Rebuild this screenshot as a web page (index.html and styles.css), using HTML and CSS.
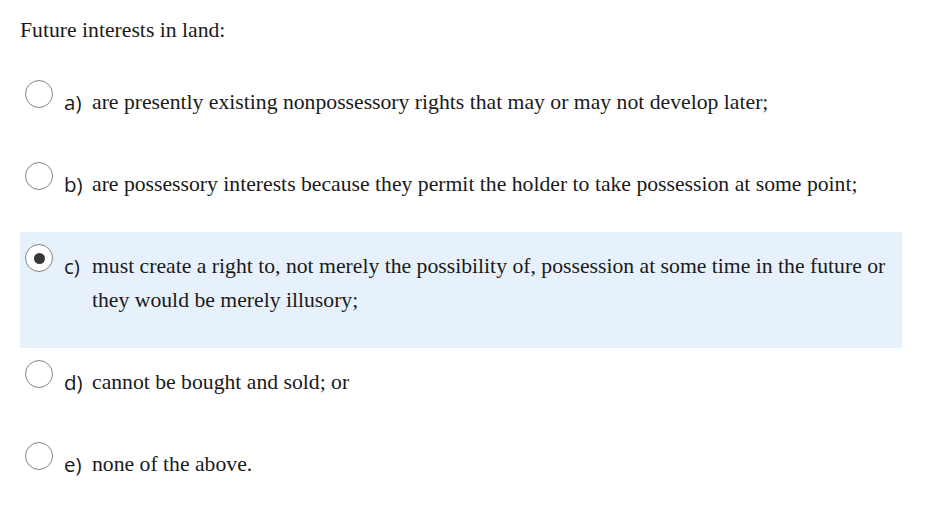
FILE: index.html
```html
<!DOCTYPE html>
<html>
<head>
<meta charset="utf-8">
<link rel="stylesheet" href="styles.css">
</head>
<body>
<div class="question">
  <div class="stem">Future interests in land:</div>
  <div class="options">
    <div class="option">
      <span class="radio"></span>
      <span class="letter">a)</span>
      <span class="text">are presently existing nonpossessory rights that may or may not develop later;</span>
    </div>
    <div class="option">
      <span class="radio"></span>
      <span class="letter">b)</span>
      <span class="text">are possessory interests because they permit the holder to take possession at some point;</span>
    </div>
    <div class="option selected">
      <span class="radio checked"></span>
      <span class="letter">c)</span>
      <span class="text">must create a right to, not merely the possibility of, possession at some time in the future or they would be merely illusory;</span>
    </div>
    <div class="option">
      <span class="radio"></span>
      <span class="letter">d)</span>
      <span class="text">cannot be bought and sold; or</span>
    </div>
    <div class="option">
      <span class="radio"></span>
      <span class="letter">e)</span>
      <span class="text">none of the above.</span>
    </div>
  </div>
</div>
</body>
</html>
```

FILE: styles.css
```css
html, body {
  margin: 0;
  padding: 0;
  background: #ffffff;
}
.question {
  padding: 13px 37px 0 20px;
  font-family: "Liberation Serif", "Times New Roman", serif;
  font-size: 21.7px;
  color: #1a1a1a;
}
.stem {
  line-height: 34px;
}
.options {
  margin-top: 21px;
  display: flex;
  flex-direction: column;
}
.option {
  display: flex;
  align-items: flex-start;
  padding: 12px 15px 31px 5px;
}
.option.selected {
  background: #e7f1fb;
}
.radio {
  flex: none;
  width: 26px;
  height: 26px;
  border: 1px solid #858585;
  border-radius: 50%;
  background: #ffffff;
  box-sizing: content-box;
  display: flex;
  align-items: center;
  justify-content: center;
  margin-right: 11px;
}
.radio.checked::after {
  content: "";
  width: 11px;
  height: 11px;
  border-radius: 50%;
  background: #383838;
}
.letter {
  flex: none;
  width: 28px;
  margin-top: 5px;
  line-height: 34px;
  font-family: "Open Sans", "Liberation Sans", sans-serif;
  font-size: 20.5px;
  color: #1a1a1a;
}
.text {
  margin-top: 5px;
  line-height: 34px;
}
```
